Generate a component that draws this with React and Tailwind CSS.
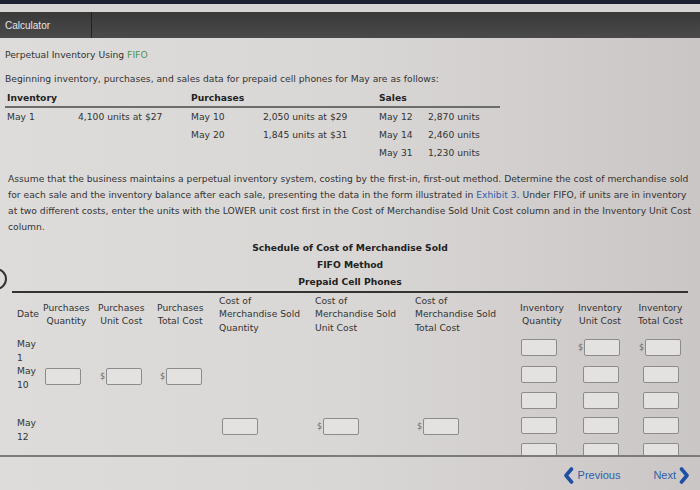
import React from 'react';

const Box = ({ dollar }) => (
  <div className="flex items-center">
    {dollar && <span className="text-[8px] text-[#6a6a6a] mr-[1px] leading-none">$</span>}
    <div className="w-[36px] h-[17px] rounded-[2px] border border-[#8c8c8c] bg-[#e3e2e0]" />
  </div>
);

const Chevron = ({ dir }) => (
  <svg width="11" height="17" viewBox="0 0 11 17">
    <polyline
      points={dir === 'left' ? '8.5,2 3,8.5 8.5,15' : '2.5,2 8,8.5 2.5,15'}
      fill="none"
      stroke="#1f4fa3"
      strokeWidth="3.6"
      strokeLinecap="round"
      strokeLinejoin="round"
    />
  </svg>
);

const cols = 'grid grid-cols-[26px_55px_59px_62px_96px_100px_105px_58px_60px_57px]';

const App = () => {
  return (
    <div className="relative w-[700px] h-[490px] overflow-hidden bg-gradient-to-r from-[#dedcda] via-[#d9d7d5] to-[#cac6c6] font-['DejaVu_Sans',sans-serif] text-[9.2px] text-[#333]">
      {/* bezel + toolbar */}
      <div className="h-[4px] bg-[#1e2230]" />
      <div className="h-[8px] bg-[#d7d5d3]" />
      <div className="h-[26px] flex bg-gradient-to-b from-[#393939] to-[#4a4a4a]">
        <div className="w-[92px] border-r border-[#232323] flex items-center pl-[5px] font-['Liberation_Sans',sans-serif] text-[10px] text-[#e6e6e6]">
          Calculator
        </div>
      </div>

      {/* scrolling content */}
      <div className="relative h-[417px] overflow-hidden">
        <div className="absolute -left-[15px] top-[230px] w-[22px] h-[22px] rounded-full border-2 border-[#333]" />

        <div className="pl-[5px] pt-[11px]">
          <p className="leading-[12px]">
            Perpetual Inventory Using <span className="text-[#4f944f]">FIFO</span>
          </p>
          <p className="leading-[12px] mt-[12px]">
            Beginning inventory, purchases, and sales data for prepaid cell phones for May are as follows:
          </p>

          {/* data table */}
          <div className="w-[495px] mt-[7px]">
            <div className="grid grid-cols-[71px_113px_72px_116px_49px_72px] pl-[2px] pb-[2px] border-b-2 border-[#6c6c6c] font-bold text-[#222] leading-[12px]">
              <span>Inventory</span>
              <span />
              <span>Purchases</span>
              <span />
              <span>Sales</span>
              <span />
            </div>
            <div className="grid grid-cols-[71px_113px_72px_116px_49px_72px] pl-[2px] auto-rows-[18px] items-center">
              <span>May 1</span>
              <span>4,100 units at $27</span>
              <span>May 10</span>
              <span>2,050 units at $29</span>
              <span>May 12</span>
              <span>2,870 units</span>

              <span />
              <span />
              <span>May 20</span>
              <span>1,845 units at $31</span>
              <span>May 14</span>
              <span>2,460 units</span>

              <span />
              <span />
              <span />
              <span />
              <span>May 31</span>
              <span>1,230 units</span>
            </div>
          </div>

          <p className="mt-[9px] pl-[3px] leading-[16px] whitespace-nowrap">
            Assume that the business maintains a perpetual inventory system, costing by the first-in, first-out method. Determine the cost of merchandise sold
            <br />
            for each sale and the inventory balance after each sale, presenting the data in the form illustrated in{' '}
            <span className="text-[#2d5db0]">Exhibit 3</span>. Under FIFO, if units are in inventory
            <br />
            at two different costs, enter the units with the LOWER unit cost first in the Cost of Merchandise Sold Unit Cost column and in the Inventory Unit Cost
            <br />
            column.
          </p>
        </div>

        {/* schedule */}
        <div className="mx-[12px] mt-[4px]">
          <div className="border-b-2 border-[#333] pb-[1px] text-center font-bold text-[#222] leading-[17px]">
            <p>Schedule of Cost of Merchandise Sold</p>
            <p>FIFO Method</p>
            <p>Prepaid Cell Phones</p>
          </div>
        </div>

        <div className="pl-[17px]">
          <div className={`${cols} h-[42px] items-center leading-[13.5px] whitespace-nowrap`}>
            <span>Date</span>
            <span className="text-center justify-self-start">Purchases<br />Quantity</span>
            <span className="text-center justify-self-start">Purchases<br />Unit Cost</span>
            <span className="text-center justify-self-start">Purchases<br />Total Cost</span>
            <span>Cost of<br />Merchandise Sold<br />Quantity</span>
            <span>Cost of<br />Merchandise Sold<br />Unit Cost</span>
            <span>Cost of<br />Merchandise Sold<br />Total Cost</span>
            <span className="text-center justify-self-start">Inventory<br />Quantity</span>
            <span className="text-center justify-self-start">Inventory<br />Unit Cost</span>
            <span className="text-center justify-self-start">Inventory<br />Total Cost</span>
          </div>

          {/* May 1 */}
          <div className={`${cols} h-[27px] items-start`}>
            <span className="leading-[14px] pt-[2px]">May<br />1</span>
            <span />
            <span />
            <span />
            <span />
            <span />
            <span />
            <div className="pt-[4px] pl-[1px]"><Box /></div>
            <div className="pt-[4px]"><Box dollar /></div>
            <div className="pt-[4px] pl-[1px]"><Box dollar /></div>
          </div>

          {/* May 10 */}
          <div className={`${cols} h-[51px] items-start`}>
            <span className="leading-[14px] pt-[2px]">May<br />10</span>
            <div className="pt-[6px] pl-[2px]"><Box /></div>
            <div className="pt-[6px] pl-[2px]"><Box dollar /></div>
            <div className="pt-[6px] pl-[3px]"><Box dollar /></div>
            <span />
            <span />
            <span />
            <div className="pt-[4px] pl-[1px] flex flex-col gap-[9px]"><Box /><Box /></div>
            <div className="pt-[4px] pl-[5px] flex flex-col gap-[9px]"><Box /><Box /></div>
            <div className="pt-[4px] pl-[5px] flex flex-col gap-[9px]"><Box /><Box /></div>
          </div>

          {/* May 12 */}
          <div className={`${cols} items-start`}>
            <span className="leading-[14px] pt-[3px]">May<br />12</span>
            <span />
            <span />
            <span />
            <div className="pt-[5px] pl-[3px]"><Box /></div>
            <div className="pt-[5px] pl-[2px]"><Box dollar /></div>
            <div className="pt-[5px] pl-[2px]"><Box dollar /></div>
            <div className="pt-[4px] pl-[1px] flex flex-col gap-[9px]"><Box /><Box /></div>
            <div className="pt-[4px] pl-[5px] flex flex-col gap-[9px]"><Box /><Box /></div>
            <div className="pt-[4px] pl-[5px] flex flex-col gap-[9px]"><Box /><Box /></div>
          </div>
        </div>
      </div>

      {/* footer */}
      <div className="h-[2px] bg-[#7c7a7a]" />
      <div className="h-[33px] flex items-center justify-end pr-[10px] pt-[4px] font-['Liberation_Sans',sans-serif] text-[11px] text-[#2f5ea8]">
        <div className="flex items-center gap-[4px]">
          <Chevron dir="left" />
          <span>Previous</span>
        </div>
        <div className="flex items-center gap-[3px] ml-[33px]">
          <span>Next</span>
          <Chevron dir="right" />
        </div>
      </div>
    </div>
  );
};

export default App;
